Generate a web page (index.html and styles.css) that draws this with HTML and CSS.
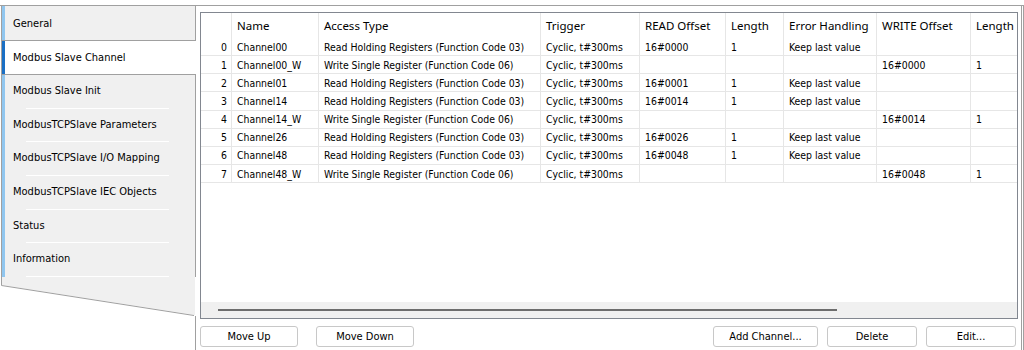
FILE: index.html
```html
<!DOCTYPE html>
<html lang="en">

<head>
  <meta charset="UTF-8">
  <title>Modbus Slave Channel</title>
  <link rel="stylesheet" href="styles.css">
</head>

<body>
  <div class="editor">
    <nav class="tabs">
      <div class="tab tab--first">General</div>
      <div class="tab tab--active">Modbus Slave Channel</div>
      <div class="tab tab--sep">Modbus Slave Init</div>
      <div class="tab tab--sep">ModbusTCPSlave Parameters</div>
      <div class="tab tab--sep">ModbusTCPSlave I/O Mapping</div>
      <div class="tab tab--sep">ModbusTCPSlave IEC Objects</div>
      <div class="tab tab--sep">Status</div>
      <div class="tab tab--sep">Information</div>
      <svg class="tabs__tail" width="196" height="40" viewBox="0 0 196 40">
        <polygon points="1,0 195,0 195,38 1,8" fill="#f0f0f0" />
        <polyline points="1.5,0 1.5,8.5 194,38.5" fill="none" stroke="#a0a0a0" stroke-width="1" />
      </svg>
      <div class="tabs__rest"></div>
    </nav>

    <section class="panel">
      <div class="grid">
        <div class="grid__body">
          <table class="channels">
            <thead>
              <tr>
                <th class="c-num"></th>
                <th class="c-name">Name</th>
                <th class="c-access">Access Type</th>
                <th class="c-trigger">Trigger</th>
                <th class="c-read">READ Offset</th>
                <th class="c-len">Length</th>
                <th class="c-err">Error Handling</th>
                <th class="c-write">WRITE Offset</th>
                <th class="c-len2">Length</th>
              </tr>
            </thead>
            <tbody>
              <tr>
                <td class="num">0</td><td>Channel00</td><td>Read Holding Registers (Function Code 03)</td><td>Cyclic, t#300ms</td>
                <td>16#0000</td><td>1</td><td>Keep last value</td><td></td><td></td>
              </tr>
              <tr>
                <td class="num">1</td><td>Channel00_W</td><td>Write Single Register (Function Code 06)</td><td>Cyclic, t#300ms</td>
                <td></td><td></td><td></td><td>16#0000</td><td>1</td>
              </tr>
              <tr>
                <td class="num">2</td><td>Channel01</td><td>Read Holding Registers (Function Code 03)</td><td>Cyclic, t#300ms</td>
                <td>16#0001</td><td>1</td><td>Keep last value</td><td></td><td></td>
              </tr>
              <tr>
                <td class="num">3</td><td>Channel14</td><td>Read Holding Registers (Function Code 03)</td><td>Cyclic, t#300ms</td>
                <td>16#0014</td><td>1</td><td>Keep last value</td><td></td><td></td>
              </tr>
              <tr>
                <td class="num">4</td><td>Channel14_W</td><td>Write Single Register (Function Code 06)</td><td>Cyclic, t#300ms</td>
                <td></td><td></td><td></td><td>16#0014</td><td>1</td>
              </tr>
              <tr>
                <td class="num">5</td><td>Channel26</td><td>Read Holding Registers (Function Code 03)</td><td>Cyclic, t#300ms</td>
                <td>16#0026</td><td>1</td><td>Keep last value</td><td></td><td></td>
              </tr>
              <tr>
                <td class="num">6</td><td>Channel48</td><td>Read Holding Registers (Function Code 03)</td><td>Cyclic, t#300ms</td>
                <td>16#0048</td><td>1</td><td>Keep last value</td><td></td><td></td>
              </tr>
              <tr>
                <td class="num">7</td><td>Channel48_W</td><td>Write Single Register (Function Code 06)</td><td>Cyclic, t#300ms</td>
                <td></td><td></td><td></td><td>16#0048</td><td>1</td>
              </tr>
            </tbody>
          </table>
        </div>
        <div class="grid__scroll">
          <div class="grid__thumb"></div>
        </div>
      </div>

      <div class="actions">
        <button class="btn btn--move">Move Up</button>
        <button class="btn btn--move">Move Down</button>
        <span class="actions__spacer"></span>
        <button class="btn btn--add">Add Channel...</button>
        <button class="btn btn--edit">Delete</button>
        <button class="btn btn--edit">Edit...</button>
      </div>
    </section>
  </div>
</body>

</html>
```

FILE: styles.css
```css
html,
body {
  margin: 0;
  padding: 0;
  background: #fff;
}

body {
  font-family: "DejaVu Sans Condensed", "Liberation Sans", sans-serif;
  font-size: 11px;
  color: #000;
}

.editor {
  display: flex;
  margin-top: 5px;
  height: 345px;
  border-top: 1px solid #a0a0a0;
  box-sizing: border-box;
}

/* left tab strip */
.tabs {
  display: flex;
  flex-direction: column;
  width: 196px;
  flex-shrink: 0;
}

.tab {
  height: 33.7px;
  line-height: 32px;
  margin-left: 1px;
  padding-left: 11px;
  background: #f0f0f0 linear-gradient(#fff, #fff) no-repeat 24px 100% / 143px 1px;
  border-left: 1px solid #a0a0a0;
  box-shadow: inset 3px 0 0 #90c6ef;
  border-right: 1px solid #a0a0a0;
  white-space: nowrap;
}

.tab--first {
  height: 34px;
  line-height: 36px;
  background: #f0f0f0;
}

.tab--active {
  height: 35px;
  line-height: 33px;
  background: #fff;
  border-top: 1px solid #a0a0a0;
  border-bottom: 1px solid #a0a0a0;
  border-right: 0;
  box-shadow: inset 3px 0 0 #1a6fc4;
  box-sizing: border-box;
}

.tabs__tail {
  display: block;
  margin-bottom: -1px;
}

.tabs__rest {
  flex: 1;
  border-right: 1px solid #a0a0a0;
}

/* right panel */
.panel {
  flex: 1;
  display: flex;
  flex-direction: column;
  padding: 6px 3px 0 4px;
  border-right: 3px double #a0a0a0;
  min-width: 0;
}

.grid {
  height: 307px;
  display: flex;
  flex-direction: column;
  border: 1px solid #828790;
  box-sizing: border-box;
  overflow: hidden;
}

.grid__body {
  flex: 1;
  overflow: hidden;
}

.channels {
  table-layout: fixed;
  border-collapse: separate;
  border-spacing: 0;
  width: 860px;
}

.channels th,
.channels td {
  box-sizing: border-box;
  padding: 0 0 0 5px;
  text-align: left;
  white-space: nowrap;
  overflow: hidden;
  border-right: 1px solid #e6e6e6;
}

.channels th {
  height: 25px;
  font-family: "Noto Sans", "Liberation Sans", sans-serif;
  font-size: 11.5px;
  font-weight: normal;
  padding-top: 0;
}

.channels td {
  height: 18.15px;
  font-size: 10.4px;
  border-bottom: 1px solid #e6e6e6;
}

.channels td.num {
  text-align: right;
  padding: 0 4px 0 0;
}

.c-num { width: 31px; }
.c-name { width: 87px; }
.c-access { width: 222px; }
.c-trigger { width: 99px; }
.c-read { width: 86px; }
.c-len { width: 58px; }
.c-err { width: 93px; }
.c-write { width: 94px; }
.c-len2 { width: 90px; }

.grid__scroll {
  height: 16px;
  background: #f0f0f0;
  display: flex;
  align-items: center;
}

.grid__thumb {
  margin-left: 17px;
  width: 619px;
  height: 2px;
  background: #6d6d6d;
}

/* buttons */
.actions {
  display: flex;
  gap: 9px;
  margin-top: 7px;
  padding-right: 2px;
}

.actions__spacer {
  flex: 1;
}

.btn {
  height: 21px;
  padding: 0;
  font-family: "DejaVu Sans Condensed", "Liberation Sans", sans-serif;
  font-size: 11px;
  color: #000;
  background: #fff;
  border: 1px solid #c8c8c8;
  border-radius: 3px;
}

.btn--move {
  width: 98px;
}

.btn--move + .btn--move {
  margin-left: 9px;
}

.btn--add {
  width: 105px;
}

.btn--edit {
  width: 90px;
}
```
